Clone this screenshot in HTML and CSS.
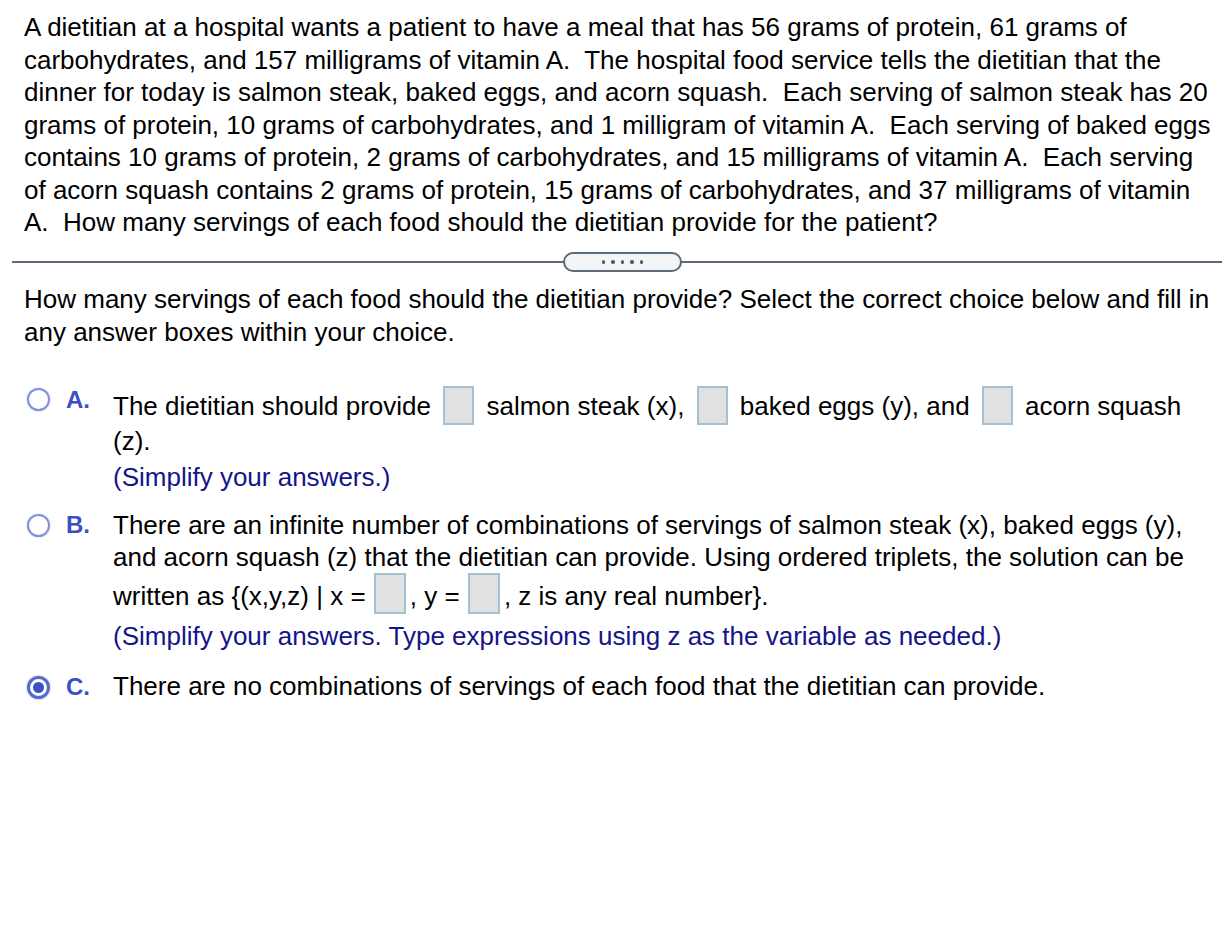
FILE: index.html
```html
<!DOCTYPE html>
<html>
<head>
<meta charset="utf-8">
<link rel="stylesheet" href="styles.css">
</head>
<body>
<div class="page">
  <p class="problem">A dietitian at a hospital wants a patient to have a meal that has 56 grams of protein, 61 grams of carbohydrates, and 157 milligrams of vitamin A.&nbsp; The hospital food service tells the dietitian that the dinner for today is salmon steak, baked eggs, and acorn squash.&nbsp; Each serving of salmon steak has 20 grams of protein, 10 grams of carbohydrates, and 1 milligram of vitamin A.&nbsp; Each serving of baked eggs contains 10 grams of protein, 2 grams of carbohydrates, and 15 milligrams of vitamin A.&nbsp; Each serving of acorn squash contains 2 grams of protein, 15 grams of carbohydrates, and 37 milligrams of vitamin A.&nbsp; How many servings of each food should the dietitian provide for the patient?</p>

  <div class="divider">
    <span class="pill"><span class="dot"></span><span class="dot"></span><span class="dot"></span><span class="dot"></span><span class="dot"></span></span>
  </div>

  <p class="question">How many servings of each food should the dietitian provide? Select the correct choice below and fill in any answer boxes within your choice.</p>

  <div class="options">
    <div class="option opt-a">
      <span class="radio"></span>
      <span class="letter">A.</span>
      <div class="body">
        <div class="line">The dietitian should provide <span class="box"></span> salmon steak (x), <span class="box"></span> baked eggs (y), and <span class="box"></span> acorn squash (z).</div>
        <div class="hint">(Simplify your answers.)</div>
      </div>
    </div>
    <div class="option opt-b">
      <span class="radio"></span>
      <span class="letter">B.</span>
      <div class="body">
        <div class="line">There are an infinite number of combinations of servings of salmon steak (x), baked eggs (y), and acorn squash (z) that the dietitian can provide. Using ordered triplets, the solution can be written as {(x,y,z) | x&nbsp;= <span class="box tall"></span>, y&nbsp;= <span class="box tall"></span>, z is any real number}.</div>
        <div class="hint">(Simplify your answers. Type expressions using z as the variable as needed.)</div>
      </div>
    </div>
    <div class="option opt-c">
      <span class="radio checked"></span>
      <span class="letter">C.</span>
      <div class="body">
        <div class="line">There are no combinations of servings of each food that the dietitian can provide.</div>
      </div>
    </div>
  </div>
</div>
</body>
</html>
```

FILE: styles.css
```css
html, body {
  margin: 0;
  padding: 0;
  background: #ffffff;
}

body {
  font-family: "Liberation Sans", Arial, sans-serif;
  color: #000000;
  font-size: 26px;
}

.page {
  padding-top: 11px;
}

.problem {
  margin: 0;
  padding: 0 9px 0 24px;
  line-height: 32.5px;
}

.divider {
  position: relative;
  margin: 22.5px 0 0 12px;
  height: 2px;
  background: #5d6b78;
}

.pill {
  position: absolute;
  left: 551px;
  top: -9px;
  width: 115px;
  height: 16px;
  border: 2px solid #5d6b78;
  border-radius: 10px;
  background: #f3f4f6;
  display: flex;
  align-items: center;
  justify-content: center;
  gap: 6px;
}

.dot {
  width: 3.5px;
  height: 3.5px;
  border-radius: 50%;
  background: #4f5c69;
}

.question {
  margin: 20px 0 0;
  padding: 0 9px 0 24px;
  line-height: 32.5px;
}

.options {
  margin-top: 38px;
  padding-left: 27px;
}

.option {
  display: grid;
  grid-template-columns: 39px 47px 1fr;
  align-items: start;
}

.opt-a {
  margin-bottom: 16px;
}

.opt-b {
  margin-bottom: 18px;
}

.radio {
  box-sizing: border-box;
  width: 23px;
  height: 23px;
  margin-top: 2px;
  border: 2px solid #7f91dc;
  border-radius: 50%;
  box-shadow: 0 0 1.5px #9aa8e4;
  position: relative;
}

.opt-b .radio {
  margin-top: 5px;
}

.opt-c .radio {
  margin-top: 6px;
}

.radio.checked {
  border: 3px solid #5468d2;
  box-shadow: 0 0 2px #7f8fdc;
}

.radio.checked::after {
  content: "";
  position: absolute;
  left: 3px;
  top: 3px;
  width: 11px;
  height: 11px;
  border-radius: 50%;
  background: #3a4fc8;
}

.letter {
  font-weight: bold;
  font-size: 24px;
  color: #3c4fc2;
  line-height: 28px;
  margin-top: 0;
}

.opt-b .letter {
  margin-top: 2px;
}

.opt-c .letter {
  margin-top: 3px;
}

.body {
  padding-right: 9px;
}

.line {
  line-height: 32px;
}

.hint {
  color: #14148a;
  line-height: 32px;
}

.opt-a .hint {
  margin-top: 4px;
}

.opt-b .hint {
  margin-top: 6px;
}

.box {
  display: inline-block;
  box-sizing: border-box;
  width: 31px;
  height: 39px;
  border: 2px solid #a3c1d1;
  background: #e1e1e1;
  vertical-align: -10px;
  margin: 0 5px;
}

.box.tall {
  width: 32px;
  height: 41px;
  vertical-align: -9px;
  margin: 0 4px 0 1px;
}
```
